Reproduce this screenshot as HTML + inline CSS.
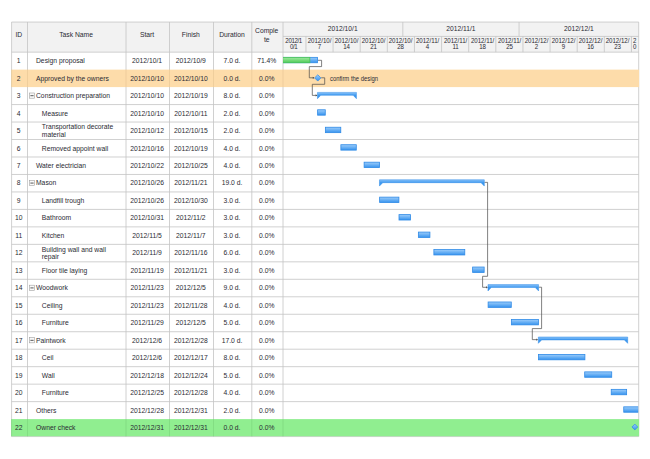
<!DOCTYPE html>
<html><head><meta charset="utf-8"><title>Gantt</title>
<style>
html,body{margin:0;padding:0;background:#fff;}
body{width:650px;height:459px;position:relative;overflow:hidden;font-family:"Liberation Sans",Arial,sans-serif;font-size:6.75px;color:#2a2a33;}
.a{position:absolute;}
.c{position:absolute;text-align:center;white-space:nowrap;}
.l{position:absolute;background:#cfcfcf;}
.hd{position:absolute;background:#f2f2f2;}
.t{position:absolute;box-sizing:border-box;padding-right:1.4px;display:flex;align-items:center;justify-content:center;text-align:center;line-height:7.5px;}
.n{position:absolute;display:flex;align-items:center;line-height:7.5px;}
.bar{position:absolute;box-sizing:border-box;border:1px solid #2f8ae6;background:linear-gradient(#8cc4fa,#3f9af0);border-radius:0.5px;}
.w{position:absolute;text-align:center;font-size:6.8px;line-height:6.3px;transform:scaleX(0.9);transform-origin:50% 0;}
.m{position:absolute;text-align:center;font-size:6.7px;line-height:13px;}
.bx{position:absolute;width:4px;height:4px;border:0.6px solid #aaa;box-sizing:content-box;}
.bx:after{content:"";position:absolute;left:0.8px;right:0.8px;top:1.7px;height:0.6px;background:#888;}
</style></head><body>

<svg class="a" style="left:0;top:0" width="650" height="459" viewBox="0 0 650 459">
<defs><linearGradient id="g" x1="0" y1="0" x2="0" y2="1"><stop offset="0" stop-color="#9ccdfb"/><stop offset="1" stop-color="#3693ee"/></linearGradient><linearGradient id="g2" x1="0" y1="0" x2="0" y2="1"><stop offset="0" stop-color="#8cc4fa"/><stop offset="0.45" stop-color="#3f9af0"/><stop offset="1" stop-color="#3a94ee"/></linearGradient><linearGradient id="gg" x1="0" y1="0" x2="0" y2="1"><stop offset="0" stop-color="#a0eaa0"/><stop offset="1" stop-color="#4fcb58"/></linearGradient>
<clipPath id="cp"><rect x="283.0" y="52.15" width="355.20000000000005" height="384.428"/></clipPath></defs>
<rect x="11.6" y="22.05" width="627.1" height="30.099999999999998" fill="#f2f2f2"/>
<path d="M11.6 22.05H638.7" stroke="#c4c4c4" stroke-width="0.8"/>
<path d="M11.6 52.15H638.7" stroke="#c4c4c4" stroke-width="0.8"/>
<path d="M11.6 104.572H638.7" stroke="#c4c4c4" stroke-width="0.8"/>
<path d="M11.6 122.04599999999999H638.7" stroke="#c4c4c4" stroke-width="0.8"/>
<path d="M11.6 139.52H638.7" stroke="#c4c4c4" stroke-width="0.8"/>
<path d="M11.6 156.994H638.7" stroke="#c4c4c4" stroke-width="0.8"/>
<path d="M11.6 174.468H638.7" stroke="#c4c4c4" stroke-width="0.8"/>
<path d="M11.6 191.942H638.7" stroke="#c4c4c4" stroke-width="0.8"/>
<path d="M11.6 209.416H638.7" stroke="#c4c4c4" stroke-width="0.8"/>
<path d="M11.6 226.89000000000001H638.7" stroke="#c4c4c4" stroke-width="0.8"/>
<path d="M11.6 244.364H638.7" stroke="#c4c4c4" stroke-width="0.8"/>
<path d="M11.6 261.83799999999997H638.7" stroke="#c4c4c4" stroke-width="0.8"/>
<path d="M11.6 279.312H638.7" stroke="#c4c4c4" stroke-width="0.8"/>
<path d="M11.6 296.786H638.7" stroke="#c4c4c4" stroke-width="0.8"/>
<path d="M11.6 314.26H638.7" stroke="#c4c4c4" stroke-width="0.8"/>
<path d="M11.6 331.734H638.7" stroke="#c4c4c4" stroke-width="0.8"/>
<path d="M11.6 349.20799999999997H638.7" stroke="#c4c4c4" stroke-width="0.8"/>
<path d="M11.6 366.68199999999996H638.7" stroke="#c4c4c4" stroke-width="0.8"/>
<path d="M11.6 384.156H638.7" stroke="#c4c4c4" stroke-width="0.8"/>
<path d="M11.6 401.63H638.7" stroke="#c4c4c4" stroke-width="0.8"/>
<path d="M11.6 436.578H638.7" stroke="#c4c4c4" stroke-width="0.8"/>
<path d="M11.6 22.05V436.578" stroke="#c4c4c4" stroke-width="0.8"/>
<path d="M27.5 22.05V436.578" stroke="#c4c4c4" stroke-width="0.8"/>
<path d="M126 22.05V436.578" stroke="#c4c4c4" stroke-width="0.8"/>
<path d="M169.5 22.05V436.578" stroke="#c4c4c4" stroke-width="0.8"/>
<path d="M213.5 22.05V436.578" stroke="#c4c4c4" stroke-width="0.8"/>
<path d="M251.8 22.05V436.578" stroke="#c4c4c4" stroke-width="0.8"/>
<path d="M283.0 22.05V436.578" stroke="#c4c4c4" stroke-width="0.8"/>
<path d="M638.7 22.05V436.578" stroke="#c4c4c4" stroke-width="0.8"/>
<rect x="11.2" y="69.624" width="627.9" height="17.474" fill="#fddcaa"/>
<rect x="11.2" y="419.104" width="627.9" height="17.174" fill="#90ee90"/>
<path d="M11.6 69.624V87.098" stroke="rgba(120,90,40,0.13)" stroke-width="0.8"/>
<path d="M11.6 419.104V436.27799999999996" stroke="rgba(20,90,20,0.13)" stroke-width="0.8"/>
<path d="M27.5 69.624V87.098" stroke="rgba(120,90,40,0.13)" stroke-width="0.8"/>
<path d="M27.5 419.104V436.27799999999996" stroke="rgba(20,90,20,0.13)" stroke-width="0.8"/>
<path d="M126 69.624V87.098" stroke="rgba(120,90,40,0.13)" stroke-width="0.8"/>
<path d="M126 419.104V436.27799999999996" stroke="rgba(20,90,20,0.13)" stroke-width="0.8"/>
<path d="M169.5 69.624V87.098" stroke="rgba(120,90,40,0.13)" stroke-width="0.8"/>
<path d="M169.5 419.104V436.27799999999996" stroke="rgba(20,90,20,0.13)" stroke-width="0.8"/>
<path d="M213.5 69.624V87.098" stroke="rgba(120,90,40,0.13)" stroke-width="0.8"/>
<path d="M213.5 419.104V436.27799999999996" stroke="rgba(20,90,20,0.13)" stroke-width="0.8"/>
<path d="M251.8 69.624V87.098" stroke="rgba(120,90,40,0.13)" stroke-width="0.8"/>
<path d="M251.8 419.104V436.27799999999996" stroke="rgba(20,90,20,0.13)" stroke-width="0.8"/>
<path d="M283.0 69.624V87.098" stroke="rgba(120,90,40,0.13)" stroke-width="0.8"/>
<path d="M283.0 419.104V436.27799999999996" stroke="rgba(20,90,20,0.13)" stroke-width="0.8"/>
<path d="M283.0 36.4H638.7" stroke="#c4c4c4" stroke-width="0.8"/>
<path d="M402.825 22.05V36.4" stroke="#c4c4c4" stroke-width="0.8"/>
<path d="M519.075 22.05V36.4" stroke="#c4c4c4" stroke-width="0.8"/>
<path d="M305.95 36.4V52.15" stroke="#c4c4c4" stroke-width="0.8"/>
<path d="M333.075 36.4V52.15" stroke="#c4c4c4" stroke-width="0.8"/>
<path d="M360.2 36.4V52.15" stroke="#c4c4c4" stroke-width="0.8"/>
<path d="M387.325 36.4V52.15" stroke="#c4c4c4" stroke-width="0.8"/>
<path d="M414.45 36.4V52.15" stroke="#c4c4c4" stroke-width="0.8"/>
<path d="M441.575 36.4V52.15" stroke="#c4c4c4" stroke-width="0.8"/>
<path d="M468.7 36.4V52.15" stroke="#c4c4c4" stroke-width="0.8"/>
<path d="M495.825 36.4V52.15" stroke="#c4c4c4" stroke-width="0.8"/>
<path d="M522.95 36.4V52.15" stroke="#c4c4c4" stroke-width="0.8"/>
<path d="M550.075 36.4V52.15" stroke="#c4c4c4" stroke-width="0.8"/>
<path d="M577.2 36.4V52.15" stroke="#c4c4c4" stroke-width="0.8"/>
<path d="M604.325 36.4V52.15" stroke="#c4c4c4" stroke-width="0.8"/>
<path d="M631.45 36.4V52.15" stroke="#c4c4c4" stroke-width="0.8"/>
<rect x="29.6" y="93.00" width="4.8" height="5.2" fill="#fafafa" stroke="#a0a0a0" stroke-width="0.6"/><path d="M30.4 95.70H33.6" stroke="#3a3a3a" stroke-width="0.85"/>
<rect x="29.6" y="180.37" width="4.8" height="5.2" fill="#fafafa" stroke="#a0a0a0" stroke-width="0.6"/><path d="M30.4 183.07H33.6" stroke="#3a3a3a" stroke-width="0.85"/>
<rect x="29.6" y="285.21" width="4.8" height="5.2" fill="#fafafa" stroke="#a0a0a0" stroke-width="0.6"/><path d="M30.4 287.91H33.6" stroke="#3a3a3a" stroke-width="0.85"/>
<rect x="29.6" y="337.63" width="4.8" height="5.2" fill="#fafafa" stroke="#a0a0a0" stroke-width="0.6"/><path d="M30.4 340.33H33.6" stroke="#3a3a3a" stroke-width="0.85"/>
<g clip-path="url(#cp)">
<path d="M318.00 60.30L321.60 60.30L321.60 66.60L309.30 66.60L309.30 77.80L313.50 77.80" fill="none" stroke="#4a4a4a" stroke-width="0.7"/>
<path d="M321.20 77.80L324.70 77.80L324.70 84.30L312.30 84.30L312.30 95.40L316.50 95.40" fill="none" stroke="#4a4a4a" stroke-width="0.7"/>
<path d="M484.40 182.37L487.60 182.37L487.60 276.30L482.60 276.30L482.60 287.30L487.00 287.30" fill="none" stroke="#4a4a4a" stroke-width="0.7"/>
<path d="M538.60 287.21L541.60 287.21L541.60 328.60L532.30 328.60L532.30 339.63L537.00 339.63" fill="none" stroke="#4a4a4a" stroke-width="0.7"/>
<path d="M314.40 77.80L312.80 76.70V78.90Z" fill="#444"/>
<path d="M317.30 95.40L315.70 94.30V96.50Z" fill="#444"/>
<path d="M487.80 287.30L486.20 286.20V288.40Z" fill="#444"/>
<path d="M538.00 339.63L536.40 338.53V340.73Z" fill="#444"/>
<rect x="282.75" y="57.35" width="34.77" height="5.4" fill="url(#g)" stroke="#2f8ae6" stroke-width="0.8"/>
<rect x="282.75" y="57.35" width="27.07" height="5.4" fill="url(#gg)" stroke="#4cc455" stroke-width="0.8"/>
<path d="M314.62 77.92L317.77 74.77L320.92 77.92L317.77 81.07Z" fill="url(#g)" stroke="#2f8ae6" stroke-width="0.7"/>
<path d="M317.47 92.40H356.43V98.70L353.12 95.30H320.77L317.47 98.70Z" fill="url(#g2)" stroke="#2f8ae6" stroke-width="0.5"/>
<rect x="317.62" y="109.77" width="7.65" height="5.4" fill="url(#g)" stroke="#2f8ae6" stroke-width="0.8"/>
<rect x="325.38" y="127.25" width="15.40" height="5.4" fill="url(#g)" stroke="#2f8ae6" stroke-width="0.8"/>
<rect x="340.88" y="144.72" width="15.40" height="5.4" fill="url(#g)" stroke="#2f8ae6" stroke-width="0.8"/>
<rect x="364.12" y="162.19" width="15.40" height="5.4" fill="url(#g)" stroke="#2f8ae6" stroke-width="0.8"/>
<path d="M379.47 179.77H484.30V186.07L481.00 182.67H382.77L379.47 186.07Z" fill="url(#g2)" stroke="#2f8ae6" stroke-width="0.5"/>
<rect x="379.62" y="197.14" width="19.27" height="5.4" fill="url(#g)" stroke="#2f8ae6" stroke-width="0.8"/>
<rect x="399.00" y="214.62" width="11.53" height="5.4" fill="url(#g)" stroke="#2f8ae6" stroke-width="0.8"/>
<rect x="418.38" y="232.09" width="11.53" height="5.4" fill="url(#g)" stroke="#2f8ae6" stroke-width="0.8"/>
<rect x="433.88" y="249.56" width="30.90" height="5.4" fill="url(#g)" stroke="#2f8ae6" stroke-width="0.8"/>
<rect x="472.62" y="267.04" width="11.53" height="5.4" fill="url(#g)" stroke="#2f8ae6" stroke-width="0.8"/>
<path d="M487.97 284.61H538.55V290.91L535.25 287.51H491.27L487.97 290.91Z" fill="url(#g2)" stroke="#2f8ae6" stroke-width="0.5"/>
<rect x="488.12" y="301.99" width="23.15" height="5.4" fill="url(#g)" stroke="#2f8ae6" stroke-width="0.8"/>
<rect x="511.38" y="319.46" width="27.03" height="5.4" fill="url(#g)" stroke="#2f8ae6" stroke-width="0.8"/>
<path d="M538.35 337.03H627.68V343.33L624.38 339.93H541.65L538.35 343.33Z" fill="url(#g2)" stroke="#2f8ae6" stroke-width="0.5"/>
<rect x="538.50" y="354.41" width="46.40" height="5.4" fill="url(#g)" stroke="#2f8ae6" stroke-width="0.8"/>
<rect x="584.70" y="371.88" width="27.02" height="5.4" fill="url(#g)" stroke="#2f8ae6" stroke-width="0.8"/>
<rect x="611.23" y="389.36" width="15.40" height="5.4" fill="url(#g)" stroke="#2f8ae6" stroke-width="0.8"/>
<rect x="623.75" y="406.83" width="15.40" height="5.4" fill="url(#g)" stroke="#2f8ae6" stroke-width="0.8"/>
<path d="M631.93 427.00L634.83 424.10L637.73 427.00L634.83 429.90Z" fill="url(#g)" stroke="#2f8ae6" stroke-width="0.7"/>
<text x="330" y="80.5" font-family="Liberation Sans, Arial, sans-serif" font-size="6.3" textLength="48" lengthAdjust="spacingAndGlyphs" fill="#2a2a33">confirm the design</text>
</g></svg>
<div class="m" style="left:282.7px;top:22.150000000000002px;width:120.125px">2012/10/1</div>
<div class="m" style="left:402.825px;top:22.150000000000002px;width:116.25000000000006px">2012/11/1</div>
<div class="m" style="left:519.075px;top:22.150000000000002px;width:119.625px">2012/12/1</div>
<div class="w" style="left:282.7px;top:38.199999999999996px;width:23.25px;height:13.5px;letter-spacing:-0.4px;margin-left:-0.9px">2012/1<br>0/1</div>
<div class="w" style="left:305.95px;top:38.199999999999996px;width:27.125px;height:13.5px">2012/10/<br>7</div>
<div class="w" style="left:333.075px;top:38.199999999999996px;width:27.125px;height:13.5px">2012/10/<br>14</div>
<div class="w" style="left:360.2px;top:38.199999999999996px;width:27.125px;height:13.5px">2012/10/<br>21</div>
<div class="w" style="left:387.325px;top:38.199999999999996px;width:27.125px;height:13.5px">2012/10/<br>28</div>
<div class="w" style="left:414.45px;top:38.199999999999996px;width:27.125px;height:13.5px">2012/11/<br>4</div>
<div class="w" style="left:441.575px;top:38.199999999999996px;width:27.125px;height:13.5px">2012/11/<br>11</div>
<div class="w" style="left:468.7px;top:38.199999999999996px;width:27.125px;height:13.5px">2012/11/<br>18</div>
<div class="w" style="left:495.825px;top:38.199999999999996px;width:27.125000000000057px;height:13.5px">2012/11/<br>25</div>
<div class="w" style="left:522.95px;top:38.199999999999996px;width:27.125px;height:13.5px">2012/12/<br>2</div>
<div class="w" style="left:550.075px;top:38.199999999999996px;width:27.125px;height:13.5px">2012/12/<br>9</div>
<div class="w" style="left:577.2px;top:38.199999999999996px;width:27.125px;height:13.5px">2012/12/<br>16</div>
<div class="w" style="left:604.325px;top:38.199999999999996px;width:27.125px;height:13.5px">2012/12/<br>23</div>
<div class="w" style="left:631.45px;top:38.199999999999996px;width:7.25px;height:13.5px">2<br>0</div>
<div class="t" style="left:11.6px;top:22.05px;width:15.9px;height:27.299999999999997px;line-height:8.5px">ID</div>
<div class="t" style="left:27.5px;top:22.05px;width:98.5px;height:27.299999999999997px;line-height:8.5px">Task Name</div>
<div class="t" style="left:126px;top:22.05px;width:43.5px;height:27.299999999999997px;line-height:8.5px">Start</div>
<div class="t" style="left:169.5px;top:22.05px;width:44.0px;height:27.299999999999997px;line-height:8.5px">Finish</div>
<div class="t" style="left:213.5px;top:22.05px;width:38.30000000000001px;height:27.299999999999997px;line-height:8.5px">Duration</div>
<div class="t" style="left:251.8px;top:22.05px;width:31.19999999999999px;height:27.299999999999997px;line-height:8.5px">Comple<br>te</div>
<div class="t" style="left:11.6px;top:52.15px;width:15.9px;height:17.474px;padding-right:1.8px">1</div>
<div class="n" style="left:36px;top:52.15px;width:90px;height:17.474px">Design proposal</div>
<div class="t" style="left:126px;top:52.15px;width:43.5px;height:17.474px">2012/10/1</div>
<div class="t" style="left:169.5px;top:52.15px;width:44.0px;height:17.474px">2012/10/9</div>
<div class="t" style="left:213.5px;top:52.15px;width:38.30000000000001px;height:17.474px">7.0 d.</div>
<div class="t" style="left:251.8px;top:52.15px;width:31.19999999999999px;height:17.474px">71.4%</div>
<div class="t" style="left:11.6px;top:69.624px;width:15.9px;height:17.474px;padding-right:1.8px">2</div>
<div class="n" style="left:36px;top:69.624px;width:90px;height:17.474px">Approved by the owners</div>
<div class="t" style="left:126px;top:69.624px;width:43.5px;height:17.474px">2012/10/10</div>
<div class="t" style="left:169.5px;top:69.624px;width:44.0px;height:17.474px">2012/10/10</div>
<div class="t" style="left:213.5px;top:69.624px;width:38.30000000000001px;height:17.474px">0.0 d.</div>
<div class="t" style="left:251.8px;top:69.624px;width:31.19999999999999px;height:17.474px">0.0%</div>
<div class="t" style="left:11.6px;top:87.098px;width:15.9px;height:17.474px;padding-right:1.8px">3</div>
<div class="n" style="left:36px;top:87.098px;width:90px;height:17.474px">Construction preparation</div>
<div class="t" style="left:126px;top:87.098px;width:43.5px;height:17.474px">2012/10/10</div>
<div class="t" style="left:169.5px;top:87.098px;width:44.0px;height:17.474px">2012/10/19</div>
<div class="t" style="left:213.5px;top:87.098px;width:38.30000000000001px;height:17.474px">8.0 d.</div>
<div class="t" style="left:251.8px;top:87.098px;width:31.19999999999999px;height:17.474px">0.0%</div>
<div class="t" style="left:11.6px;top:104.572px;width:15.9px;height:17.474px;padding-right:1.8px">4</div>
<div class="n" style="left:41.8px;top:104.572px;width:84.2px;height:17.474px">Measure</div>
<div class="t" style="left:126px;top:104.572px;width:43.5px;height:17.474px">2012/10/10</div>
<div class="t" style="left:169.5px;top:104.572px;width:44.0px;height:17.474px">2012/10/11</div>
<div class="t" style="left:213.5px;top:104.572px;width:38.30000000000001px;height:17.474px">2.0 d.</div>
<div class="t" style="left:251.8px;top:104.572px;width:31.19999999999999px;height:17.474px">0.0%</div>
<div class="t" style="left:11.6px;top:122.04599999999999px;width:15.9px;height:17.474px;padding-right:1.8px">5</div>
<div class="n" style="left:41.8px;top:122.04599999999999px;width:84.2px;height:17.474px">Transportation decorate<br>material</div>
<div class="t" style="left:126px;top:122.04599999999999px;width:43.5px;height:17.474px">2012/10/12</div>
<div class="t" style="left:169.5px;top:122.04599999999999px;width:44.0px;height:17.474px">2012/10/15</div>
<div class="t" style="left:213.5px;top:122.04599999999999px;width:38.30000000000001px;height:17.474px">2.0 d.</div>
<div class="t" style="left:251.8px;top:122.04599999999999px;width:31.19999999999999px;height:17.474px">0.0%</div>
<div class="t" style="left:11.6px;top:139.52px;width:15.9px;height:17.474px;padding-right:1.8px">6</div>
<div class="n" style="left:41.8px;top:139.52px;width:84.2px;height:17.474px">Removed appoint wall</div>
<div class="t" style="left:126px;top:139.52px;width:43.5px;height:17.474px">2012/10/16</div>
<div class="t" style="left:169.5px;top:139.52px;width:44.0px;height:17.474px">2012/10/19</div>
<div class="t" style="left:213.5px;top:139.52px;width:38.30000000000001px;height:17.474px">4.0 d.</div>
<div class="t" style="left:251.8px;top:139.52px;width:31.19999999999999px;height:17.474px">0.0%</div>
<div class="t" style="left:11.6px;top:156.994px;width:15.9px;height:17.474px;padding-right:1.8px">7</div>
<div class="n" style="left:36px;top:156.994px;width:90px;height:17.474px">Water electrician</div>
<div class="t" style="left:126px;top:156.994px;width:43.5px;height:17.474px">2012/10/22</div>
<div class="t" style="left:169.5px;top:156.994px;width:44.0px;height:17.474px">2012/10/25</div>
<div class="t" style="left:213.5px;top:156.994px;width:38.30000000000001px;height:17.474px">4.0 d.</div>
<div class="t" style="left:251.8px;top:156.994px;width:31.19999999999999px;height:17.474px">0.0%</div>
<div class="t" style="left:11.6px;top:174.468px;width:15.9px;height:17.474px;padding-right:1.8px">8</div>
<div class="n" style="left:36px;top:174.468px;width:90px;height:17.474px">Mason</div>
<div class="t" style="left:126px;top:174.468px;width:43.5px;height:17.474px">2012/10/26</div>
<div class="t" style="left:169.5px;top:174.468px;width:44.0px;height:17.474px">2012/11/21</div>
<div class="t" style="left:213.5px;top:174.468px;width:38.30000000000001px;height:17.474px">19.0 d.</div>
<div class="t" style="left:251.8px;top:174.468px;width:31.19999999999999px;height:17.474px">0.0%</div>
<div class="t" style="left:11.6px;top:191.942px;width:15.9px;height:17.474px;padding-right:1.8px">9</div>
<div class="n" style="left:41.8px;top:191.942px;width:84.2px;height:17.474px">Landfill trough</div>
<div class="t" style="left:126px;top:191.942px;width:43.5px;height:17.474px">2012/10/26</div>
<div class="t" style="left:169.5px;top:191.942px;width:44.0px;height:17.474px">2012/10/30</div>
<div class="t" style="left:213.5px;top:191.942px;width:38.30000000000001px;height:17.474px">3.0 d.</div>
<div class="t" style="left:251.8px;top:191.942px;width:31.19999999999999px;height:17.474px">0.0%</div>
<div class="t" style="left:11.6px;top:209.416px;width:15.9px;height:17.474px;padding-right:1.8px">10</div>
<div class="n" style="left:41.8px;top:209.416px;width:84.2px;height:17.474px">Bathroom</div>
<div class="t" style="left:126px;top:209.416px;width:43.5px;height:17.474px">2012/10/31</div>
<div class="t" style="left:169.5px;top:209.416px;width:44.0px;height:17.474px">2012/11/2</div>
<div class="t" style="left:213.5px;top:209.416px;width:38.30000000000001px;height:17.474px">3.0 d.</div>
<div class="t" style="left:251.8px;top:209.416px;width:31.19999999999999px;height:17.474px">0.0%</div>
<div class="t" style="left:11.6px;top:226.89000000000001px;width:15.9px;height:17.474px;padding-right:1.8px">11</div>
<div class="n" style="left:41.8px;top:226.89000000000001px;width:84.2px;height:17.474px">Kitchen</div>
<div class="t" style="left:126px;top:226.89000000000001px;width:43.5px;height:17.474px">2012/11/5</div>
<div class="t" style="left:169.5px;top:226.89000000000001px;width:44.0px;height:17.474px">2012/11/7</div>
<div class="t" style="left:213.5px;top:226.89000000000001px;width:38.30000000000001px;height:17.474px">3.0 d.</div>
<div class="t" style="left:251.8px;top:226.89000000000001px;width:31.19999999999999px;height:17.474px">0.0%</div>
<div class="t" style="left:11.6px;top:244.364px;width:15.9px;height:17.474px;padding-right:1.8px">12</div>
<div class="n" style="left:41.8px;top:244.364px;width:84.2px;height:17.474px">Building wall and wall<br>repair</div>
<div class="t" style="left:126px;top:244.364px;width:43.5px;height:17.474px">2012/11/9</div>
<div class="t" style="left:169.5px;top:244.364px;width:44.0px;height:17.474px">2012/11/16</div>
<div class="t" style="left:213.5px;top:244.364px;width:38.30000000000001px;height:17.474px">6.0 d.</div>
<div class="t" style="left:251.8px;top:244.364px;width:31.19999999999999px;height:17.474px">0.0%</div>
<div class="t" style="left:11.6px;top:261.83799999999997px;width:15.9px;height:17.474px;padding-right:1.8px">13</div>
<div class="n" style="left:41.8px;top:261.83799999999997px;width:84.2px;height:17.474px">Floor tile laying</div>
<div class="t" style="left:126px;top:261.83799999999997px;width:43.5px;height:17.474px">2012/11/19</div>
<div class="t" style="left:169.5px;top:261.83799999999997px;width:44.0px;height:17.474px">2012/11/21</div>
<div class="t" style="left:213.5px;top:261.83799999999997px;width:38.30000000000001px;height:17.474px">3.0 d.</div>
<div class="t" style="left:251.8px;top:261.83799999999997px;width:31.19999999999999px;height:17.474px">0.0%</div>
<div class="t" style="left:11.6px;top:279.312px;width:15.9px;height:17.474px;padding-right:1.8px">14</div>
<div class="n" style="left:36px;top:279.312px;width:90px;height:17.474px">Woodwork</div>
<div class="t" style="left:126px;top:279.312px;width:43.5px;height:17.474px">2012/11/23</div>
<div class="t" style="left:169.5px;top:279.312px;width:44.0px;height:17.474px">2012/12/5</div>
<div class="t" style="left:213.5px;top:279.312px;width:38.30000000000001px;height:17.474px">9.0 d.</div>
<div class="t" style="left:251.8px;top:279.312px;width:31.19999999999999px;height:17.474px">0.0%</div>
<div class="t" style="left:11.6px;top:296.786px;width:15.9px;height:17.474px;padding-right:1.8px">15</div>
<div class="n" style="left:41.8px;top:296.786px;width:84.2px;height:17.474px">Ceiling</div>
<div class="t" style="left:126px;top:296.786px;width:43.5px;height:17.474px">2012/11/23</div>
<div class="t" style="left:169.5px;top:296.786px;width:44.0px;height:17.474px">2012/11/28</div>
<div class="t" style="left:213.5px;top:296.786px;width:38.30000000000001px;height:17.474px">4.0 d.</div>
<div class="t" style="left:251.8px;top:296.786px;width:31.19999999999999px;height:17.474px">0.0%</div>
<div class="t" style="left:11.6px;top:314.26px;width:15.9px;height:17.474px;padding-right:1.8px">16</div>
<div class="n" style="left:41.8px;top:314.26px;width:84.2px;height:17.474px">Furniture</div>
<div class="t" style="left:126px;top:314.26px;width:43.5px;height:17.474px">2012/11/29</div>
<div class="t" style="left:169.5px;top:314.26px;width:44.0px;height:17.474px">2012/12/5</div>
<div class="t" style="left:213.5px;top:314.26px;width:38.30000000000001px;height:17.474px">5.0 d.</div>
<div class="t" style="left:251.8px;top:314.26px;width:31.19999999999999px;height:17.474px">0.0%</div>
<div class="t" style="left:11.6px;top:331.734px;width:15.9px;height:17.474px;padding-right:1.8px">17</div>
<div class="n" style="left:36px;top:331.734px;width:90px;height:17.474px">Paintwork</div>
<div class="t" style="left:126px;top:331.734px;width:43.5px;height:17.474px">2012/12/6</div>
<div class="t" style="left:169.5px;top:331.734px;width:44.0px;height:17.474px">2012/12/28</div>
<div class="t" style="left:213.5px;top:331.734px;width:38.30000000000001px;height:17.474px">17.0 d.</div>
<div class="t" style="left:251.8px;top:331.734px;width:31.19999999999999px;height:17.474px">0.0%</div>
<div class="t" style="left:11.6px;top:349.20799999999997px;width:15.9px;height:17.474px;padding-right:1.8px">18</div>
<div class="n" style="left:41.8px;top:349.20799999999997px;width:84.2px;height:17.474px">Ceil</div>
<div class="t" style="left:126px;top:349.20799999999997px;width:43.5px;height:17.474px">2012/12/6</div>
<div class="t" style="left:169.5px;top:349.20799999999997px;width:44.0px;height:17.474px">2012/12/17</div>
<div class="t" style="left:213.5px;top:349.20799999999997px;width:38.30000000000001px;height:17.474px">8.0 d.</div>
<div class="t" style="left:251.8px;top:349.20799999999997px;width:31.19999999999999px;height:17.474px">0.0%</div>
<div class="t" style="left:11.6px;top:366.68199999999996px;width:15.9px;height:17.474px;padding-right:1.8px">19</div>
<div class="n" style="left:41.8px;top:366.68199999999996px;width:84.2px;height:17.474px">Wall</div>
<div class="t" style="left:126px;top:366.68199999999996px;width:43.5px;height:17.474px">2012/12/18</div>
<div class="t" style="left:169.5px;top:366.68199999999996px;width:44.0px;height:17.474px">2012/12/24</div>
<div class="t" style="left:213.5px;top:366.68199999999996px;width:38.30000000000001px;height:17.474px">5.0 d.</div>
<div class="t" style="left:251.8px;top:366.68199999999996px;width:31.19999999999999px;height:17.474px">0.0%</div>
<div class="t" style="left:11.6px;top:384.156px;width:15.9px;height:17.474px;padding-right:1.8px">20</div>
<div class="n" style="left:41.8px;top:384.156px;width:84.2px;height:17.474px">Furniture</div>
<div class="t" style="left:126px;top:384.156px;width:43.5px;height:17.474px">2012/12/25</div>
<div class="t" style="left:169.5px;top:384.156px;width:44.0px;height:17.474px">2012/12/28</div>
<div class="t" style="left:213.5px;top:384.156px;width:38.30000000000001px;height:17.474px">4.0 d.</div>
<div class="t" style="left:251.8px;top:384.156px;width:31.19999999999999px;height:17.474px">0.0%</div>
<div class="t" style="left:11.6px;top:401.63px;width:15.9px;height:17.474px;padding-right:1.8px">21</div>
<div class="n" style="left:36px;top:401.63px;width:90px;height:17.474px">Others</div>
<div class="t" style="left:126px;top:401.63px;width:43.5px;height:17.474px">2012/12/28</div>
<div class="t" style="left:169.5px;top:401.63px;width:44.0px;height:17.474px">2012/12/31</div>
<div class="t" style="left:213.5px;top:401.63px;width:38.30000000000001px;height:17.474px">2.0 d.</div>
<div class="t" style="left:251.8px;top:401.63px;width:31.19999999999999px;height:17.474px">0.0%</div>
<div class="t" style="left:11.6px;top:419.104px;width:15.9px;height:17.474px;padding-right:1.8px">22</div>
<div class="n" style="left:36px;top:419.104px;width:90px;height:17.474px">Owner check</div>
<div class="t" style="left:126px;top:419.104px;width:43.5px;height:17.474px">2012/12/31</div>
<div class="t" style="left:169.5px;top:419.104px;width:44.0px;height:17.474px">2012/12/31</div>
<div class="t" style="left:213.5px;top:419.104px;width:38.30000000000001px;height:17.474px">0.0 d.</div>
<div class="t" style="left:251.8px;top:419.104px;width:31.19999999999999px;height:17.474px">0.0%</div>
</body></html>
